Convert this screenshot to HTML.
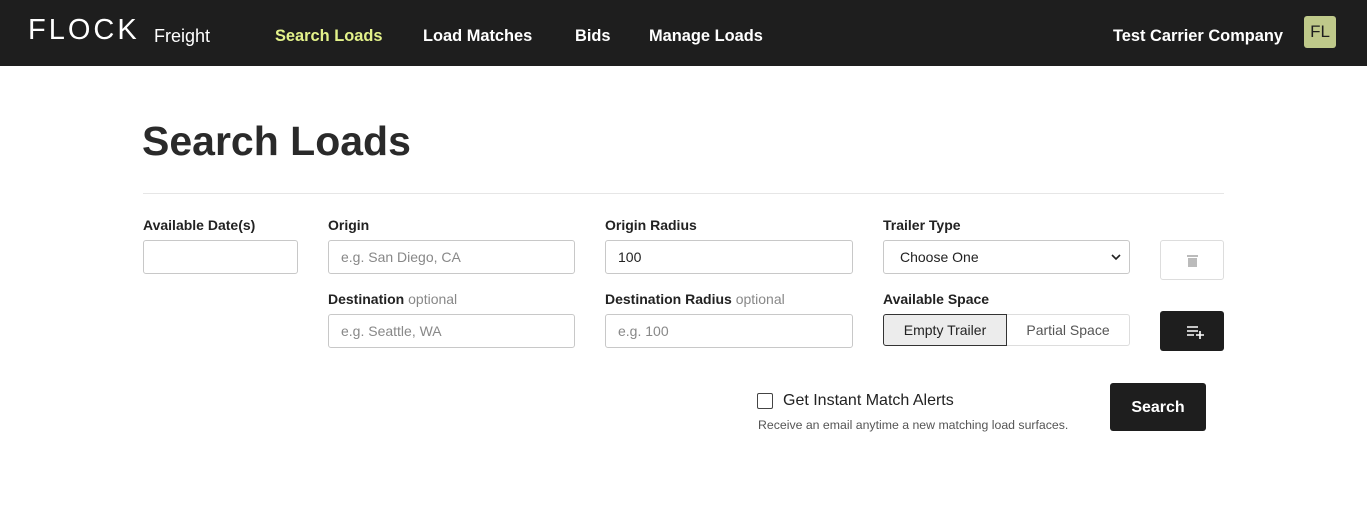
<!DOCTYPE html>
<html><head><meta charset="utf-8"><style>
*{box-sizing:border-box;margin:0;padding:0}
body{width:1367px;height:530px;background:#fff;font-family:"Liberation Sans",Arial,sans-serif;color:#222;position:relative;overflow:hidden}
.hdr{position:absolute;left:0;top:0;width:1367px;height:66px;background:#1e1e1e;color:#fff}
.abs{position:absolute}
.logo{left:28px;top:14px;font-size:29px;font-weight:400;letter-spacing:3px;color:#fff;font-family:"Liberation Sans",sans-serif}
.nav{top:27px;font-size:16.4px;font-weight:bold;color:#fff}
.lbl{font-size:14px;font-weight:bold;color:#222}
.opt{font-weight:normal;color:#888}
.inp{border:1px solid #c8c8c8;border-radius:3px;height:34px;font-size:14px;color:#888;padding:8px 12px;background:#fff}
</style></head><body>
<div class="hdr">
<div class="abs logo">FLOCK</div>
<div class="abs" style="left:154px;top:26px;font-size:18px;color:#fff">Freight</div>
<div class="abs nav" style="left:275px;color:#e3f28a">Search Loads</div>
<div class="abs nav" style="left:423px">Load Matches</div>
<div class="abs nav" style="left:575px">Bids</div>
<div class="abs nav" style="left:649px">Manage Loads</div>
<div class="abs nav" style="left:1113px">Test Carrier Company</div>
<div class="abs" style="left:1304px;top:16px;width:32px;height:32px;background:#bfc98a;border-radius:3px;color:#1e1e1e;font-size:17px;text-align:center;line-height:32px">FL</div>
</div>
<div class="abs" style="left:142px;top:118px;font-size:41px;font-weight:bold;color:#2a2a2a">Search Loads</div>
<div class="abs" style="left:143px;top:193px;width:1081px;height:1px;background:#e6e6e6"></div>

<div class="abs lbl" style="left:143px;top:217px">Available Date(s)</div>
<div class="abs inp" style="left:143px;top:240px;width:155px"></div>
<div class="abs lbl" style="left:328px;top:217px">Origin</div>
<div class="abs inp" style="left:328px;top:240px;width:247px">e.g. San Diego, CA</div>
<div class="abs lbl" style="left:605px;top:217px">Origin Radius</div>
<div class="abs inp" style="left:605px;top:240px;width:248px;color:#222">100</div>
<div class="abs lbl" style="left:883px;top:217px">Trailer Type</div>
<div class="abs inp" style="left:883px;top:240px;width:247px;color:#222;padding-left:16px">Choose One
<svg class="abs" style="right:8px;top:13px" width="10" height="7" viewBox="0 0 10 7"><path d="M1 1l4 4 4-4" stroke="#222" stroke-width="1.6" fill="none"/></svg></div>
<div class="abs" style="left:1160px;top:240px;width:64px;height:40px;border:1px solid #ddd;border-radius:3px">
<svg class="abs" style="left:26px;top:13px" width="11" height="13" viewBox="0 0 11 13"><rect x="0" y="1" width="11" height="2" fill="#bbb"/><rect x="1" y="4" width="9" height="9" fill="#bbb"/></svg></div>

<div class="abs lbl" style="left:328px;top:291px">Destination <span class="opt">optional</span></div>
<div class="abs inp" style="left:328px;top:314px;width:247px">e.g. Seattle, WA</div>
<div class="abs lbl" style="left:605px;top:291px">Destination Radius <span class="opt">optional</span></div>
<div class="abs inp" style="left:605px;top:314px;width:248px">e.g. 100</div>
<div class="abs lbl" style="left:883px;top:291px">Available Space</div>
<div class="abs" style="left:883px;top:314px;width:124px;height:32px;border:1px solid #333;background:#ececec;border-radius:3px 0 0 3px;font-size:14px;color:#222;text-align:center;line-height:30px">Empty Trailer</div>
<div class="abs" style="left:1007px;top:314px;width:123px;height:32px;border:1px solid #ddd;border-left:none;border-radius:0 3px 3px 0;font-size:14px;color:#555;text-align:center;line-height:30px">Partial Space</div>
<div class="abs" style="left:1160px;top:311px;width:64px;height:40px;background:#1e1e1e;border-radius:3px">
<svg class="abs" style="left:27px;top:14px" width="18" height="14" viewBox="0 0 18 14"><path d="M0 2h11M0 6h11M0 10h7M13 6v8M9 10h8" stroke="#fff" stroke-width="1.6"/></svg></div>

<div class="abs" style="left:757px;top:393px;width:16px;height:16px;border:1.5px solid #444;border-radius:2px"></div>
<div class="abs" style="left:783px;top:392px;font-size:16px;color:#222">Get Instant Match Alerts</div>
<div class="abs" style="left:758px;top:418px;font-size:12.3px;color:#555">Receive an email anytime a new matching load surfaces.</div>
<div class="abs" style="left:1110px;top:383px;width:96px;height:48px;background:#1e1e1e;border-radius:3px;color:#fff;font-size:16px;font-weight:bold;text-align:center;line-height:50px">Search</div>
</body></html>
